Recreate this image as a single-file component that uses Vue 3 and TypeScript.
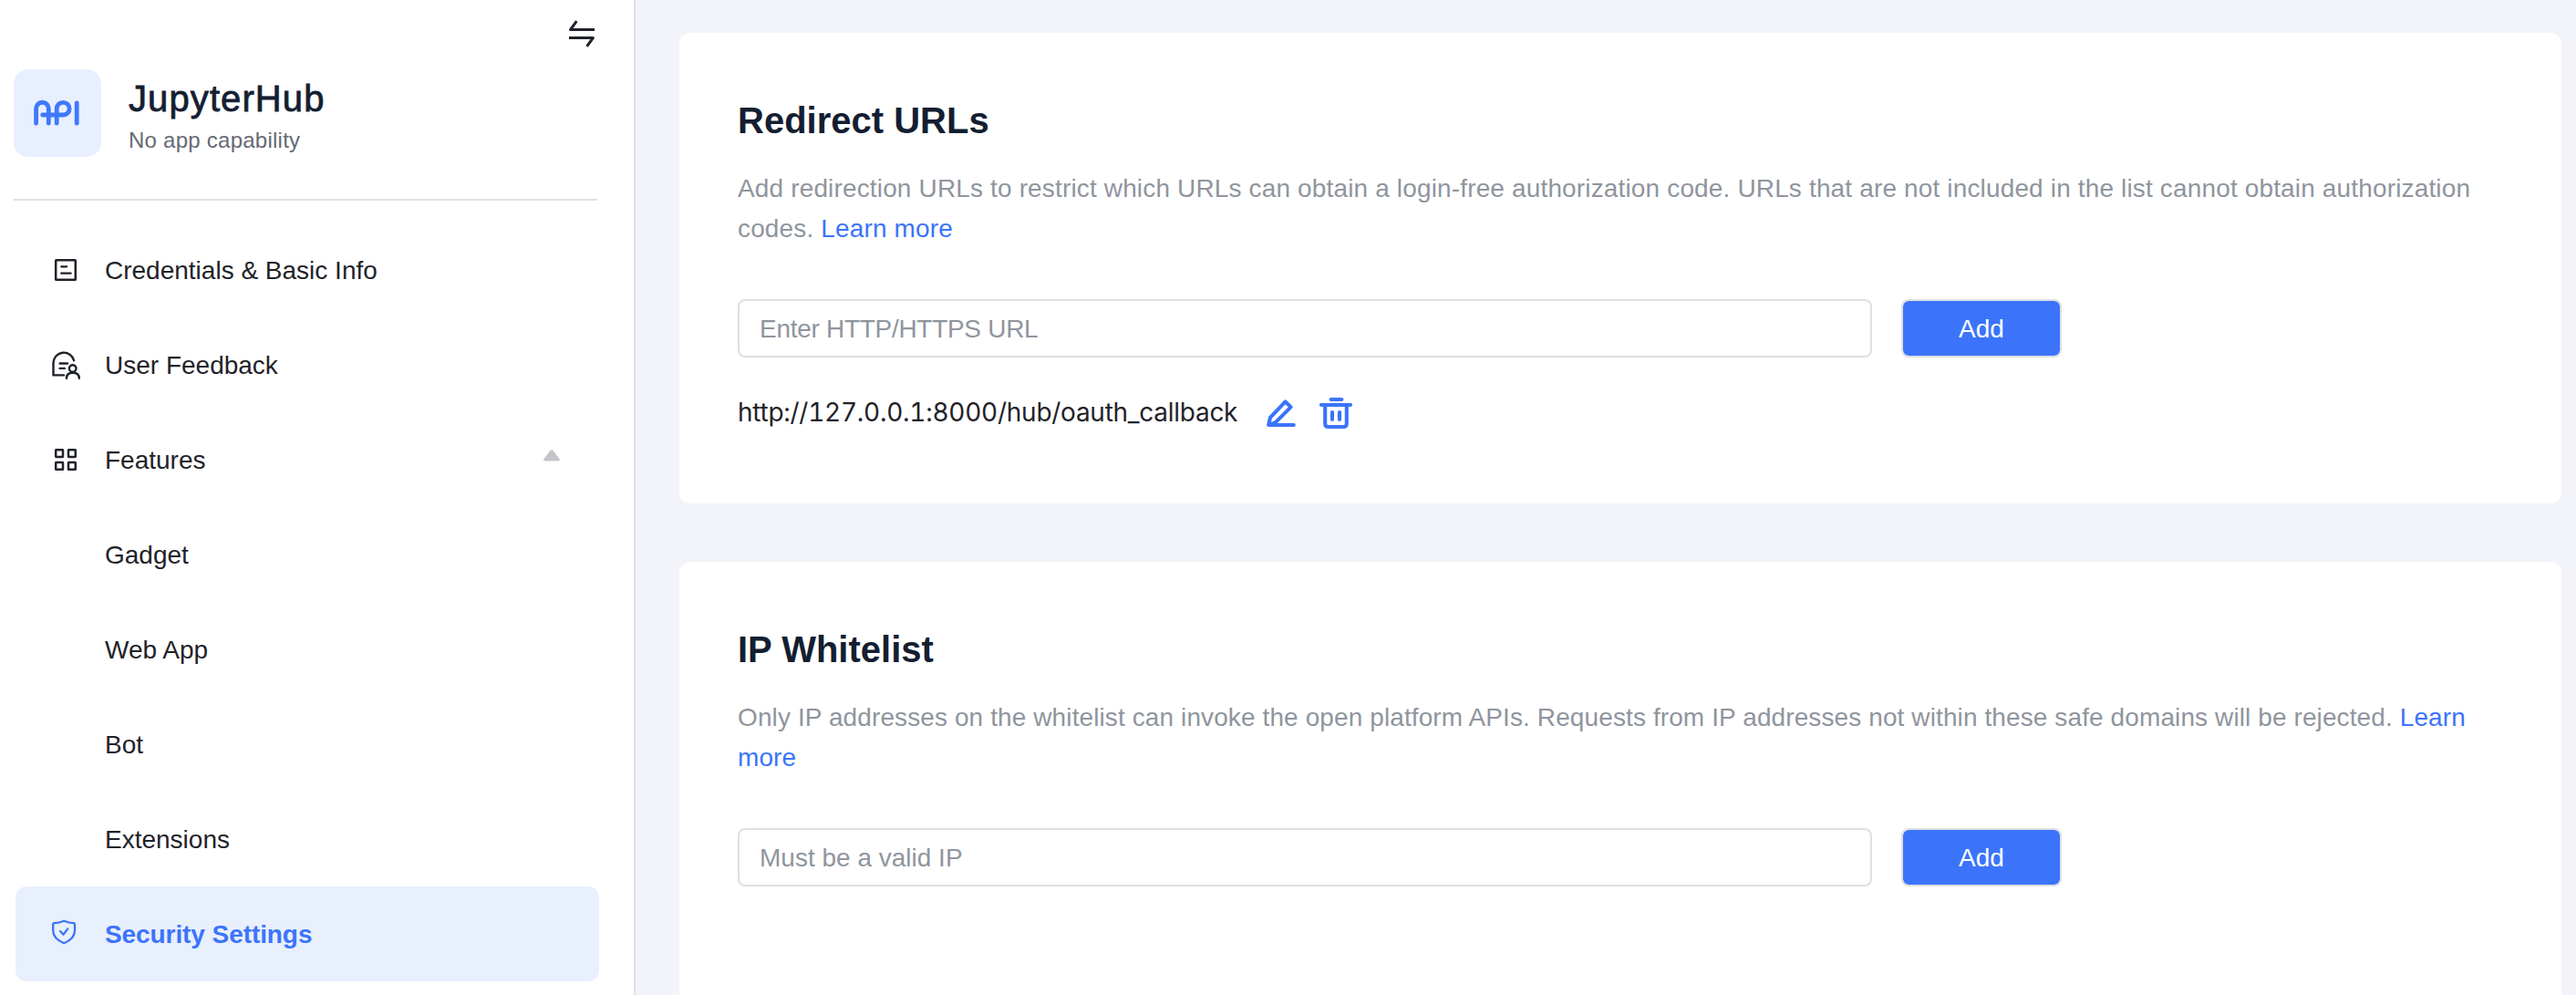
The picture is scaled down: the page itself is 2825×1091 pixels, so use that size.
<script setup lang="ts">
import { ref } from 'vue'

interface NavItem {
  label: string
  icon?: 'doc' | 'feedback' | 'grid' | 'shield'
  active?: boolean
  open?: boolean
}

const navItems: NavItem[] = [
  { label: 'Credentials & Basic Info', icon: 'doc' },
  { label: 'User Feedback', icon: 'feedback' },
  { label: 'Features', icon: 'grid', open: true },
  { label: 'Gadget' },
  { label: 'Web App' },
  { label: 'Bot' },
  { label: 'Extensions' },
  { label: 'Security Settings', icon: 'shield', active: true },
]

const redirectUrl = ref('')
const ipAddress = ref('')
const callbacks = ref<string[]>(['http://127.0.0.1:8000/hub/oauth_callback'])
</script>

<template>
  <div class="page">
    <aside class="sidebar">
      <div class="toggle-row">
        <svg class="toggle" viewBox="0 0 32 32" fill="none" stroke="#1f2329" stroke-width="3" stroke-linejoin="round">
          <path d="M30 11.5H3.6L10.4 2.2M2 20.5H28.4L21.6 29.8" />
        </svg>
      </div>
      <header class="app">
        <div class="avatar">
          <svg viewBox="0 0 96 96" fill="none" stroke="#3f79fb" stroke-width="4.8" stroke-linecap="round">
            <path d="M24.6 59.2V43.1a6.85 6.85 0 0 1 13.7 0V59.2" />
            <path d="M47.2 59.2V43.2a6.9 6.9 0 0 1 6.9-6.9h.2a6.85 6.85 0 0 1 0 13.7H31.7" />
            <path d="M69.2 37V59.2" />
          </svg>
        </div>
        <div class="app-text">
          <div class="app-name">JupyterHub</div>
          <div class="app-sub">No app capability</div>
        </div>
      </header>
      <nav class="nav">
        <a v-for="item in navItems" :key="item.label" class="nav-item" :class="{ active: item.active }">
          <span class="nav-icon">
            <svg v-if="item.icon === 'doc'" viewBox="0 0 40 40" fill="none" stroke="#1f2329" stroke-width="2.5">
              <rect x="9.2" y="9.2" width="21.6" height="21.6" rx=".6" />
              <path d="M15.2 16.3h6M15.2 23.7h10.4" stroke-width="2.3" stroke-linecap="round" />
            </svg>
            <svg v-else-if="item.icon === 'feedback'" viewBox="1 .7 40 40" fill="none" stroke="#1f2329" stroke-width="2.4" stroke-linecap="round" stroke-linejoin="round">
              <path d="M30.1 15.9A11.5 11.5 0 0 0 7.5 18.3V32.1H19" />
              <path d="M14.6 19.2H23M14.6 24.6H19.8" />
              <circle cx="28.7" cy="24.7" r="3.8" />
              <path d="M22 35.4C22 31.6 24.6 29.4 28.8 29.4S35.8 31.6 35.8 35.4" />
            </svg>
            <svg v-else-if="item.icon === 'grid'" viewBox="0 0 40 40" fill="none" stroke="#1f2329" stroke-width="2.5">
              <rect x="9.2" y="9.2" width="7.8" height="7.8" rx=".4" />
              <rect x="23" y="9.2" width="7.8" height="7.8" rx=".4" />
              <rect x="9.2" y="23" width="7.8" height="7.8" rx=".4" />
              <rect x="23" y="23" width="7.8" height="7.8" rx=".4" />
            </svg>
            <svg v-else-if="item.icon === 'shield'" viewBox="2 .6 40 40" fill="none" stroke="#3b74fa" stroke-width="2.3" stroke-linejoin="round" stroke-linecap="round">
              <path d="M20.2 6.3C23.4 7.7 27 8.6 30.4 8.7Q32 8.8 32 10.2V17C32 23.4 27.4 27.6 20.2 30.8C13 27.6 8.2 23.4 8.2 17V10.2Q8.2 8.8 9.8 8.7C13.2 8.6 17 7.7 20.2 6.3Z" />
              <path d="M16 17.6 19.5 21.3 24.3 15" />
            </svg>
          </span>
          <span class="nav-label">{{ item.label }}</span>
          <svg v-if="item.open" class="caret" viewBox="0 0 18 13"><path d="M7.6.8Q9-.5 10.4.8L17.4 10Q18.6 12.6 16.4 12.6H1.6Q-.6 12.6.6 10Z" fill="#c4c5ca" /></svg>
        </a>
      </nav>
    </aside>

    <main class="main">
      <section class="card">
        <h2>Redirect URLs</h2>
        <p class="desc redirect-desc">Add redirection URLs to restrict which URLs can obtain a login-free authorization code. URLs that are not included in the list cannot obtain authorization codes. <a>Learn more</a></p>
        <div class="form">
          <input v-model="redirectUrl" class="redirect-input" placeholder="Enter HTTP/HTTPS URL" />
          <button type="button">Add</button>
        </div>
        <div v-for="url in callbacks" :key="url" class="url-row">
          <span class="url">{{ url }}</span>
          <svg class="action" viewBox="0 0 36 36" fill="none" stroke="#3b74fa" stroke-width="4.1" stroke-linejoin="round" stroke-linecap="round">
            <path d="M31.8 31H4.2L6 22.8 22.6 5.4 28.6 11.4 11.6 28.4 4.4 30.9" />
          </svg>
          <svg class="action" viewBox="0 0 36 36" fill="none" stroke="#3b74fa" stroke-width="4.1" stroke-linecap="round">
            <path d="M12.6 3H24.4M2 9H34M6.2 9V29.4Q6.2 33 9.8 33H26.2Q29.8 33 29.8 29.4V9M14 17V25M22 17V25" />
          </svg>
        </div>
      </section>
      <section class="card">
        <h2>IP Whitelist</h2>
        <p class="desc ip-desc">Only IP addresses on the whitelist can invoke the open platform APIs. Requests from IP addresses not within these safe domains will be rejected. <a>Learn more</a></p>
        <div class="form">
          <input v-model="ipAddress" placeholder="Must be a valid IP" />
          <button type="button">Add</button>
        </div>
      </section>
    </main>
  </div>
</template>

<style>
body { margin: 0; }
</style>

<style scoped>
* { box-sizing: border-box; }
.page { display: flex; height: 1091px; overflow: hidden; background: #f3f4f9; font-family: "Liberation Sans", Arial, sans-serif; font-size: 28px; color: #1f2329; }
.sidebar { width: 697px; flex: none; border-right: 2px solid #dee0e6; background: #fff; }
.toggle-row { display: flex; justify-content: flex-end; height: 76px; padding: 21px 41px 0 0; }
.toggle { width: 32px; height: 32px; }
.app { display: flex; gap: 30px; width: 640px; height: 144px; margin-left: 15px; border-bottom: 2px solid #dee0e3; }
.avatar { width: 96px; height: 96px; border-radius: 16px; background: #e8efff; }
.avatar svg { display: block; width: 96px; height: 96px; }
.app-name { margin-top: 8px; font-size: 40px; line-height: 48px; letter-spacing: 1.1px; color: #141e31; -webkit-text-stroke: .8px #141e31; }
.app-sub { margin-top: 4px; font-size: 24px; line-height: 36px; letter-spacing: .25px; color: #646a73; }
.nav { margin-top: 24px; }
.nav-item { display: flex; align-items: center; width: 640px; height: 104px; margin-left: 17px; padding: 0 43px 0 35px; border-radius: 12px; }
.nav-icon { width: 40px; height: 40px; margin-right: 23px; }
.nav-icon svg { display: block; width: 40px; height: 40px; }
.nav-label { flex: 1; padding-top: 2px; }
.caret { width: 18px; height: 13px; margin-bottom: 9px; }
.active { background: #e8effd; color: #3b74fa; font-weight: 700; letter-spacing: -.08px; }
.main { flex: 1; padding: 36px 16px 0 48px; }
.card { height: 516px; margin-bottom: 64px; padding: 64px; border-radius: 12px; background: #fff; }
h2 { margin: 8px 0 0; font-size: 40px; line-height: 48px; color: #141e31; }
.desc { margin: 29px 0 0; line-height: 44px; color: #8f959e; }
.redirect-desc { letter-spacing: .15px; }
.ip-desc { letter-spacing: .105px; }
.desc a { color: #3b74fa; }
.form { display: flex; gap: 32px; margin-top: 55px; }
input { width: 1244px; height: 64px; padding: 2px 22px 0; border: 2px solid #dee0e3; border-radius: 8px; font: inherit; outline: none; }
.redirect-input { letter-spacing: -.29px; }
input::placeholder { color: #8f959e; opacity: 1; }
button { width: 176px; height: 64px; padding: 2px 0 0; border: 2px solid #dee0e3; border-radius: 8px; background: #3b74fa; background-clip: padding-box; color: #fff; font: inherit; }
.url-row { display: flex; align-items: center; margin-top: 43px; height: 36px; }
.url { width: 578px; margin-bottom: 2px; font-family: Inter, sans-serif; font-variant-numeric: tabular-nums; font-feature-settings: "calt" 0; letter-spacing: -.27px; }
.action { width: 36px; height: 36px; margin-right: 24px; }
</style>
